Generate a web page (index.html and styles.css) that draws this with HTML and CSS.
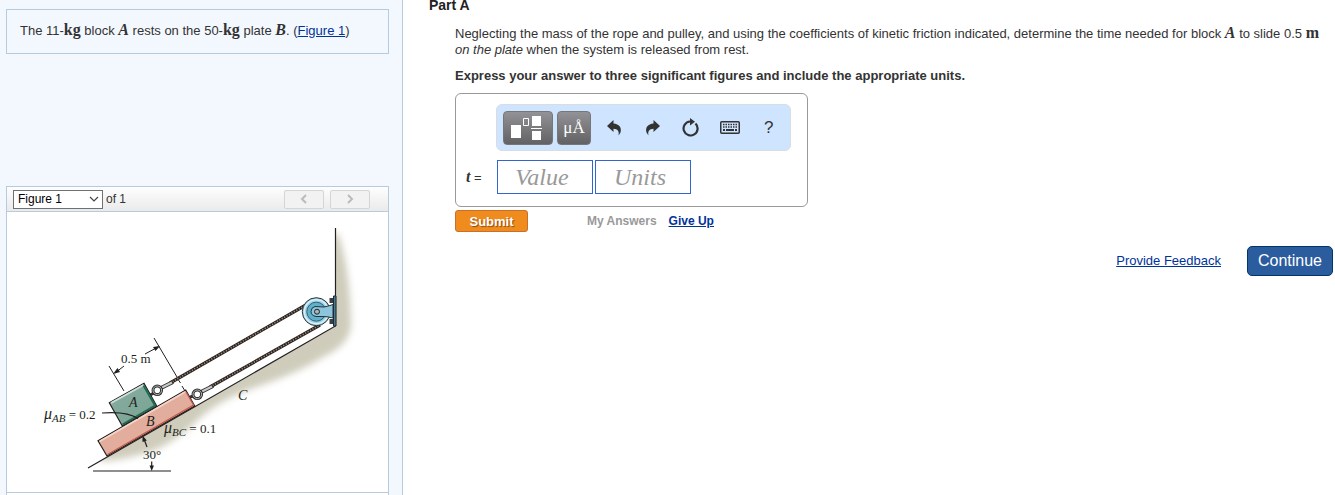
FILE: index.html
```html
<!DOCTYPE html>
<html lang="en">
<head>
<meta charset="utf-8">
<title>Part A</title>
<link rel="stylesheet" href="styles.css">
</head>
<body>
<div class="page">
  <aside class="side">
    <section class="intro">The 11-<b class="math">kg</b> block <b class="math"><i>A</i></b> rests on the 50-<b class="math">kg</b> plate <b class="math"><i>B</i></b>. (<a href="#figure">Figure 1</a>)</section>
    <section class="figure-panel" id="figure">
      <div class="figure-bar">
        <select class="figure-select" aria-label="Figure"><option>Figure 1</option></select>
        <svg class="caret" viewBox="0 0 10 6" aria-hidden="true"><path d="M1 1l4 4 4-4"/></svg>
        <span class="figure-count">of 1</span>
        <button class="nav" type="button" aria-label="Previous figure"><svg viewBox="0 0 8 10"><path d="M6 1L2 5l4 4"/></svg></button>
        <button class="nav" type="button" aria-label="Next figure"><svg viewBox="0 0 8 10"><path d="M2 1l4 4-4 4"/></svg></button>
      </div>
      <svg class="diagram" viewBox="7 212 381 280" role="img" aria-label="Block A on plate B on a 30 degree incline, joined by a rope over a pulley">
        <defs>
          <filter id="soft" x="-20%" y="-20%" width="140%" height="140%"><feGaussianBlur stdDeviation="3.500"/></filter>
          <clipPath id="ground"><path d="M336 226H380V492H88V468L336 326z"/></clipPath>
          <linearGradient id="green" x1="0" y1="0" x2="1" y2="1"><stop offset="0" stop-color="#9dbbb0"/><stop offset=".3" stop-color="#83aa9c"/><stop offset="1" stop-color="#7aa493"/></linearGradient>
        </defs>
        <g clip-path="url(#ground)"><path class="earth" filter="url(#soft)" d="M325 232L338 234Q350 268 351 325Q350 344 325 356Q300 372 262 385Q222 398 200 418Q178 440 155 450Q125 460 104 461L90 455L325 318z"/></g>
        <path class="line" d="M335.5 228V326L88 468M93 471H171"/>
        <path class="line thin" d="M109 366L124 391M154 338L177 377M178.500 380L180.500 383M182 386L185 391M124 366L115 373M145 354L158 347"/>
        <path class="tip" d="M113 374L120 372L117.500 368zM160 346L153 347L155.500 351z"/>
        <g class="rope"><path d="M170 383L305 305.500M210 387L320 325"/></g>
        <g class="strand"><path d="M170 383L305 305.500M210 387L320 325"/></g>
        <g class="link">
          <path class="sleeve" d="M161 388L173 382M201 392L213 386"/><path class="shine" d="M162 387.500L172 382.500M202 391.500L212 386.500"/>
          <path class="ring" d="M150 395L154 393M190 397L194 396"/>
          <circle class="ring" cx="157.300" cy="390.300" r="4.300"/><circle class="ring" cx="197.300" cy="394.300" r="4.300"/>
          <circle class="glint" cx="157.300" cy="390.300" r="4.300"/><circle class="glint" cx="197.300" cy="394.300" r="4.300"/>
        </g>
        <path fill="#e2ad9c" class="line" d="M98 440.700L185.700 390L194.700 406L107 456z"/>
        <path d="M99.500 441.500L185 392" fill="none" stroke="#f5d3c7" stroke-width="2"/>
        <path d="M107.500 454.500L193.500 405L186 392" fill="none" stroke="#c45a4a" stroke-width="1.200"/>
        <path fill="url(#green)" class="line" d="M109.300 402.700L144 383.300L156.700 406L122.300 426z"/>
        <path d="M111 403L143.500 385" fill="none" stroke="#cfe0d8" stroke-width="2"/>
        <path d="M122.500 424.500L155 405.500L143.500 385.500" fill="none" stroke="#1f6b52" stroke-width="2"/>
        <circle cx="316.300" cy="311.700" r="14" fill="#9fcfe0" stroke="#26333a"/>
        <circle cx="316.300" cy="311.700" r="12" fill="none" stroke="#d8eff7" stroke-width="1.500"/>
        <circle cx="316.300" cy="311.700" r="9.500" fill="#5fb0cd" stroke="#2f6478"/>
        <path d="M329.500 298h4v5h-4zM329.500 319h4v5h-4z" fill="#3b3f42"/>
        <path d="M315 306.500L324 307Q329 306 333 304.500V318Q328 316.500 323 316.500H316Q311 315.500 311 311.500Q311 307.500 315 306.500z" fill="#8cc5dc" stroke="#25323a"/>
        <path d="M333.500 296h2.500v30h-2.500z" fill="#4a7890" stroke="#1c2930"/>
        <circle cx="317" cy="311.700" r="2.500" fill="#a7b6bd" stroke="#222"/>
        <path class="line" d="M102 413Q127 411 138 418.500"/>
        <path class="line" d="M147 447L144 439M151.700 461.500V467"/>
        <path class="tip" d="M142.500 435.500L142.500 442L146.800 440.500zM151.700 471L149.500 465.500H154z"/>
        <g class="labels">
          <text x="121" y="363">0.5 m</text>
          <text x="129" y="407" class="it">A</text><text x="146" y="426" class="it">B</text><text x="238" y="400" class="it">C</text>
          <text x="44" y="419"><tspan class="it mu">μ</tspan><tspan class="it sub" dy="3">AB</tspan><tspan dy="-3"> = 0.2</tspan></text>
          <text x="164" y="433"><tspan class="it mu">μ</tspan><tspan class="it sub" dy="3">BC</tspan><tspan dy="-3"> = 0.1</tspan></text>
          <text x="143" y="459">30°</text>
        </g>
      </svg>
      <div class="figure-foot"></div>
    </section>
  </aside>
  <main class="main">
    <h1 class="part">Part A</h1>
    <div class="question">
      <p class="prompt">Neglecting the mass of the rope and pulley, and using the coefficients of kinetic friction indicated, determine the time needed for block <b class="math"><i>A</i></b> to slide 0.5 <b class="math">m</b> <em>on the plate</em> when the system is released from rest.</p>
      <p class="instruct">Express your answer to three significant figures and include the appropriate units.</p>
      <form class="answer">
        <div class="tools">
          <button class="pad wide" type="button" aria-label="Templates"><svg width="36" height="28" viewBox="0 0 36 28"><path fill="#fff" d="M1 11h10v13H1zM22 2h9v10h-9zM22 17h9v9h-9zM21 14h11v1H21z"/><path fill="none" stroke="#fff" d="M13.500 4.500h5v7h-5z"/></svg></button>
          <button class="pad" type="button" aria-label="Symbols">μÅ</button>
          <button class="tool" type="button" aria-label="Undo"><svg width="16" height="16" viewBox="0 0 16 16"><path fill="#333" d="M1 6L7.500 0v3.500C13 4 16 7.500 14.500 12.500L12.500 15.500C13.500 11 11.500 9 7.500 8.800V12z"/></svg></button>
          <button class="tool" type="button" aria-label="Redo"><svg width="16" height="16" viewBox="0 0 16 16"><path fill="#333" d="M15 6L8.500 0v3.500C3 4 0 7.500 1.500 12.500L3.500 15.500C2.500 11 4.500 9 8.500 8.800V12z"/></svg></button>
          <button class="tool" type="button" aria-label="Reset"><svg width="18" height="20" viewBox="0 0 18 20"><path fill="none" stroke="#333" stroke-width="2.200" d="M13.500 5.500A7 7 0 1 1 8 3.500"/><path fill="#333" d="M8 0l5 3.800L8 7.500z"/></svg></button>
          <button class="tool" type="button" aria-label="Keyboard"><svg class="keys" width="20" height="13" viewBox="0 0 20 13"><rect x=".75" y=".75" width="18.500" height="11.500" rx="1" fill="none" stroke="#333" stroke-width="1.500"/><path stroke="#333" stroke-width="1.500" stroke-dasharray="1.500 1" d="M3 3.500h14M3 6h14"/><path stroke="#333" stroke-width="2" d="M3 9h2M6 9h8M15 9h2"/></svg></button>
          <button class="tool help" type="button" aria-label="Help">?</button>
        </div>
        <div class="entry">
          <label for="value"><b class="math"><i>t</i></b> =</label>
          <input id="value" class="field" type="text" placeholder="Value">
          <input class="field" type="text" placeholder="Units" aria-label="Units">
        </div>
      </form>
      <div class="actions">
        <button class="submit" type="button">Submit</button>
        <span class="mine">My Answers</span>
        <a href="#give-up">Give Up</a>
      </div>
    </div>
    <div class="next">
      <a href="#feedback">Provide Feedback</a>
      <button class="continue" type="button">Continue</button>
    </div>
  </main>
</div>
</body>
</html>
```
FILE: styles.css
```css
* { box-sizing: border-box; }
body {
  margin: 0;
  color: #333;
  background: #fff;
  font: 13px/16px "Liberation Sans", Arial, sans-serif;
}
a { color: #039; }
button, input, select { font-family: inherit; margin: 0; }
svg { display: block; }
.math { font: bold 16px/1 "Liberation Serif", "Times New Roman", serif; }
.page { display: grid; grid-template-columns: 403px 1fr; height: 100vh; overflow: hidden; }
.side { background: #f3f8ff; border-right: 1px solid #b8cbdc; padding: 9px 13px 0 6px; }
.intro { border: 1px solid #b8cbdc; padding: 12px 13px 14px; margin-bottom: 132px; }
.figure-panel { border: 1px solid #b8cbdc; background: #fff; }
.figure-bar {
  display: flex;
  align-items: center;
  height: 25px;
  padding: 0 18px 0 6px;
  border-bottom: 1px solid #b8cbdc;
  background: linear-gradient(#fefefe, #eaeaea);
}
.figure-select {
  appearance: none;
  width: 90px;
  height: 19px;
  padding: 0 4px;
  border: 1px solid #707070;
  border-radius: 0;
  background: #fff;
  color: #000;
  font-size: 12px;
}
.caret { width: 10px; height: 6px; margin-left: -14px; margin-right: 4px; pointer-events: none; }
.caret path { fill: none; stroke: #444; stroke-width: 1.2; }
.figure-count { flex: 1; padding-left: 3px; font-size: 12px; }
.nav {
  display: flex;
  align-items: center;
  justify-content: center;
  width: 40px;
  height: 19px;
  margin-left: 6px;
  border: 1px solid #d5d5d5;
  border-radius: 2px;
  background: #f2f2f2;
}
.nav svg { width: 8px; height: 10px; }
.nav path { fill: none; stroke: #bbb; stroke-width: 2; }
.diagram { width: 100%; }
.figure-foot { height: 12px; border-top: 1px solid #b8cbdc; }

.earth { fill: #cfccbb; }
.line { stroke: #231f20; stroke-width: 1.2; }
path.line:not([fill]) { fill: none; }
.thin { stroke-width: 1; }
.tip { fill: #231f20; }
.rope { fill: none; stroke: #2a2321; stroke-width: 3.2; }
.strand { fill: none; stroke: #a08c7c; stroke-width: 1.6; stroke-dasharray: 1.2 1.6; }
.sleeve { stroke: #333; stroke-width: 4; }
.shine { stroke: #c8c8c8; stroke-width: 2; }
.ring { fill: none; stroke: #333; stroke-width: 3; }
.glint { fill: none; stroke: #b5b5b5; stroke-width: 1; }
.labels { fill: #231f20; font: 13px "Liberation Serif", "Times New Roman", serif; }
.it { font-size: 14px; font-style: italic; }
.mu { font-size: 16px; }
.sub { font-size: 11px; }

.main { padding: 0 2px 0 26px; }
.part { margin: 0; font-size: 14px; line-height: 10px; color: #222; }
.question { padding-left: 26px; }
p { margin: 0; }
.prompt { padding-top: 15px; }
.instruct { padding: 10px 0 9px; font-weight: bold; }
.answer {
  width: 353px;
  padding: 10px 16px 12px 10px;
  border: 1px solid #999;
  border-radius: 6px;
}
.tools {
  display: flex;
  align-items: center;
  height: 47px;
  margin-left: 30px;
  padding: 0 2px 0 6px;
  border: 1px solid #d8dde2;
  border-radius: 6px;
  background: #cfe5ff;
}
.pad {
  display: flex;
  align-items: center;
  justify-content: center;
  width: 34px;
  height: 34px;
  margin-right: 4px;
  padding: 0;
  border: 1px solid #777;
  border-radius: 4px;
  background: linear-gradient(#929297, #626264);
  color: #fff;
  font: 17px/20px "Liberation Serif", "Times New Roman", serif;
}
.wide { width: 50px; }
.tool {
  display: flex;
  align-items: center;
  justify-content: center;
  flex: 1;
  height: 34px;
  padding: 0;
  border: 0;
  background: none;
  color: #333;
}
.help { font-size: 17px; }
.entry { display: flex; align-items: center; gap: 2px; padding-top: 9px; }
.entry label { width: 29px; }
.field {
  width: 96px;
  height: 34px;
  padding: 0 16px 0 10px;
  border: 1px solid #36c;
  text-align: center;
  font: italic 24px "Liberation Serif", "Times New Roman", serif;
}
.field::placeholder { color: #999; opacity: 1; }
.actions { display: flex; align-items: center; padding-top: 3px; font-size: 12px; font-weight: bold; }
.submit {
  width: 73px;
  height: 22px;
  margin-right: 59px;
  padding: 0;
  border: 1px solid #c96f2c;
  border-radius: 3px;
  background: #f08c1e;
  color: #fff;
  font-size: 13px;
  font-weight: bold;
  text-shadow: 1px 1px 1px #8a4a10;
}
.mine { color: #999; margin-right: 12px; }
.next { display: flex; align-items: center; justify-content: flex-end; gap: 26px; padding-top: 14px; }
.continue {
  width: 86px;
  height: 30px;
  padding: 0;
  border: 1px solid #003767;
  border-radius: 5px;
  background: #2b5c9e;
  color: #fff;
  font-size: 16px;
}
```
